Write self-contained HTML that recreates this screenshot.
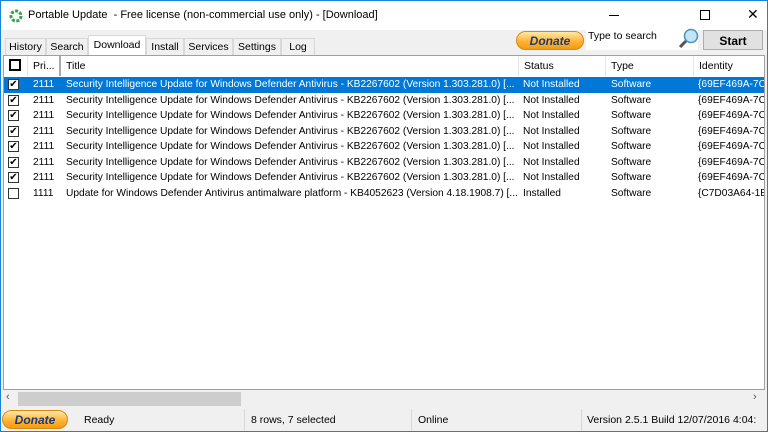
<!DOCTYPE html><html><head><style>
*{margin:0;padding:0;box-sizing:border-box}
body{width:768px;height:432px;overflow:hidden;background:#f0f0f0;font-family:"Liberation Sans",sans-serif;font-size:11px;color:#000;position:relative}
.frame{position:absolute;left:0;top:0;width:768px;height:432px;border:1px solid #1883d7;}
.title{position:absolute;left:1px;top:1px;width:766px;height:29px;background:#fff}
.title span{position:absolute;left:27px;top:8px;font-size:11px}
.abs{position:absolute}
.tab{position:absolute;top:38px;height:17px;border:1px solid #d9d9d9;border-bottom:none;background:#f0f0f0;font-size:10.5px;padding:2px 0 0 0;text-align:center}
.grid{position:absolute;left:3px;top:55px;width:762px;height:335px;background:#fff;border:1px solid #a0a0a0;overflow:hidden}
.hdr{position:absolute;top:0;height:20px;background:#fff;border-right:1px solid #e5e5e5;padding:4px 0 0 5px;font-size:10.5px}
.row{position:absolute;left:0;width:760px;height:15.5px;font-size:10.2px;white-space:nowrap}
.row div{position:absolute;top:2px;overflow:hidden}
.sel{background:#0078d7;color:#fff;}
.cb{position:absolute;left:4px;top:2px;width:11px;height:11px;border:1px solid #333;background:#fff;font-size:10px;line-height:9px;text-align:center;color:#000}
.don{position:absolute;border-radius:10px;background:linear-gradient(#ffe9a8,#ffb030 60%,#f29b10);border:1px solid #d88a10;font-weight:bold;font-style:italic;color:#1a3a7a;text-align:center}
.sb{position:absolute;top:409px;height:22px;border-left:1px solid #d8d8d8;padding-top:5px;font-size:10.5px}
</style></head><body>
<div class="title"><svg class="abs" style="left:8px;top:8px" width="14" height="14" viewBox="0 0 14 14"><circle cx="7" cy="7" r="5" fill="none" stroke="#3aa04a" stroke-width="3" stroke-dasharray="3 1.5"/></svg><span>Portable Update&nbsp; - Free license (non-commercial use only) - [Download]</span>
<div class="abs" style="left:608px;top:14px;width:10px;height:1px;background:#000"></div>
<div class="abs" style="left:699px;top:9px;width:10px;height:10px;border:1px solid #000"></div>
<div class="abs" style="left:746px;top:5px;font-size:14px">✕</div></div>
<div class="tab" style="left:5px;width:41px">History</div>
<div class="tab" style="left:46px;width:42px">Search</div>
<div class="tab" style="left:88px;top:35px;height:20px;width:58px;background:#fff;padding-top:3px">Download</div>
<div class="tab" style="left:146px;width:38px">Install</div>
<div class="tab" style="left:184px;width:49px">Services</div>
<div class="tab" style="left:233px;width:48px">Settings</div>
<div class="tab" style="left:281px;width:34px">Log</div>
<div class="don" style="left:516px;top:31px;width:68px;height:19px;font-size:12px;padding-top:2px">Donate</div>
<div class="abs" style="left:586px;top:28px;width:112px;height:22px;background:#fff;padding:2px 0 0 2px;font-size:10.5px">Type to search</div>
<svg class="abs" style="left:676px;top:28px" width="24" height="22" viewBox="0 0 24 22"><line x1="4" y1="19" x2="10" y2="13" stroke="#555" stroke-width="3"/><circle cx="15" cy="8" r="6.5" fill="#bfe6f6" stroke="#4a90b8" stroke-width="1.5"/></svg>
<div class="abs" style="left:703px;top:30px;width:60px;height:20px;background:#e1e1e1;border:1px solid #adadad;font-size:12px;font-weight:bold;text-align:center;padding-top:3px">Start</div>
<div class="grid">
<div class="hdr" style="left:0;width:24px;padding:0"><div class="cb" style="left:5px;top:3px;width:12px;height:12px;border-width:2px;border-color:#000"></div></div>
<div class="hdr" style="left:24px;width:33px;border-right:2px solid #aaa">Pri...</div>
<div class="hdr" style="left:57px;width:458px">Title</div>
<div class="hdr" style="left:515px;width:87px">Status</div>
<div class="hdr" style="left:602px;width:88px">Type</div>
<div class="hdr" style="left:690px;width:72px;border:none">Identity</div>
<div id="rows"></div>
</div>
<script>
var h='';for(var i=0;i<8;i++){var last=i==7;var t=last?'Update for Windows Defender Antivirus antimalware platform - KB4052623 (Version 4.18.1908.7) [...':'Security Intelligence Update for Windows Defender Antivirus - KB2267602 (Version 1.303.281.0) [...';
h+='<div class="row'+(i==0?' sel':'')+'" style="top:'+(21+i*15.5)+'px"><span class="cb" style="position:absolute">'+(last?'':'✔')+'</span><div style="left:29px;width:28px">'+(last?'1111':'2111')+'</div><div style="left:62px;width:452px">'+t+'</div><div style="left:519px;width:84px">'+(last?'Installed':'Not Installed')+'</div><div style="left:607px;width:84px">Software</div><div style="left:694px;width:66px">'+(last?'{C7D03A64-1B':'{69EF469A-7C.')+'</div></div>';}
document.getElementById('rows').innerHTML=h;
</script>
<div class="abs" style="left:4px;top:390px;width:760px;height:17px;background:#f0f0f0"></div>
<div class="abs" style="left:6px;top:391px;font-size:11px;color:#555">‹</div>
<div class="abs" style="left:18px;top:392px;width:223px;height:14px;background:#cdcdcd"></div>
<div class="abs" style="left:753px;top:391px;font-size:11px;color:#555">›</div>
<div class="don" style="left:2px;top:410px;width:66px;height:19px;font-size:12px;padding-top:2px">Donate</div>
<div class="abs" style="left:84px;top:414px;font-size:10.5px">Ready</div>
<div class="sb" style="left:244px;padding-left:6px">8 rows, 7 selected</div>
<div class="sb" style="left:411px;padding-left:6px">Online</div>
<div class="sb" style="left:581px;padding-left:5px;width:176px;overflow:hidden;white-space:nowrap">Version 2.5.1 Build 12/07/2016 4:04:</div>
<div class="frame"></div>
</body></html>
